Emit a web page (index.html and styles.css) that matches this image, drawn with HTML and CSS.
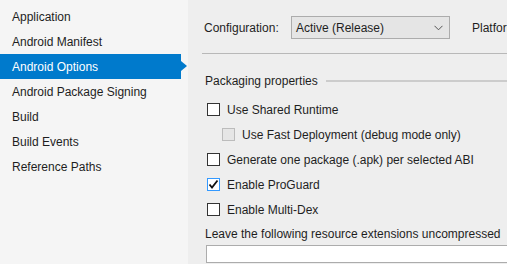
FILE: index.html
```html
<!DOCTYPE html>
<html>
<head>
<meta charset="utf-8">
<link rel="stylesheet" href="styles.css">
</head>
<body>
<div class="page">
  <nav class="sidebar">
    <div class="nav-item">Application</div>
    <div class="nav-item">Android Manifest</div>
    <div class="nav-item selected">Android Options</div>
    <div class="nav-item">Android Package Signing</div>
    <div class="nav-item">Build</div>
    <div class="nav-item">Build Events</div>
    <div class="nav-item">Reference Paths</div>
  </nav>
  <main class="content">
    <div class="config-row">
      <span class="config-label">Configuration:</span>
      <div class="dropdown">
        <span>Active (Release)</span>
        <svg class="chev" width="9" height="6" viewBox="0 0 9 6"><polyline points="0.5,0.8 4.5,4.8 8.5,0.8" fill="none" stroke="#555" stroke-width="1"/></svg>
      </div>
      <span class="platform-label">Platform:</span>
    </div>
    <div class="separator"></div>
    <div class="group-head"><span>Packaging properties</span><div class="group-line"></div></div>
    <div class="check-row"><span class="box"></span><span>Use Shared Runtime</span></div>
    <div class="check-row indent disabled"><span class="box"></span><span>Use Fast Deployment (debug mode only)</span></div>
    <div class="check-row"><span class="box"></span><span>Generate one package (.apk) per selected ABI</span></div>
    <div class="check-row"><span class="box checked"><svg width="11" height="11" viewBox="0 0 11 11"><polyline points="1.5,5.5 4,8.5 9.5,1.5" fill="none" stroke="#111" stroke-width="1.8"/></svg></span><span>Enable ProGuard</span></div>
    <div class="check-row"><span class="box"></span><span>Enable Multi-Dex</span></div>
    <div class="field-label">Leave the following resource extensions uncompressed</div>
    <div class="text-input"></div>
  </main>
</div>
</body>
</html>
```
FILE: styles.css
```css
html, body {
  margin: 0;
  padding: 0;
  width: 507px;
  height: 264px;
  overflow: hidden;
  font-family: "Liberation Sans", Arial, sans-serif;
  font-size: 12px;
  color: #1e1e1e;
}
.page {
  display: flex;
  height: 264px;
  background: #eeeeee;
}
.sidebar {
  width: 188px;
  flex: none;
  background: #f5f5f5;
  padding-top: 4px;
  box-sizing: border-box;
}
.nav-item {
  height: 25px;
  line-height: 24px;
  padding-top: 1px;
  padding-left: 12px;
  width: 181px;
  box-sizing: border-box;
  position: relative;
  white-space: nowrap;
}
.nav-item.selected {
  background: #007acc;
  color: #ffffff;
}
.nav-item.selected::after {
  content: "";
  position: absolute;
  left: 181px;
  top: 7px;
  border-top: 5px solid transparent;
  border-bottom: 5px solid transparent;
  border-left: 6px solid #007acc;
}
.content {
  flex: 1;
  min-width: 0;
  padding-left: 14px;
  padding-top: 16px;
  white-space: nowrap;
}
.config-row {
  display: flex;
  align-items: center;
  height: 23px;
  padding-left: 2px;
}
.config-label {
  width: 87px;
  flex: none;
}
.dropdown {
  width: 159px;
  height: 23px;
  box-sizing: border-box;
  border: 1px solid #acacac;
  background: #e5e5e5;
  display: flex;
  align-items: center;
  justify-content: space-between;
  padding: 0 6px 0 4px;
  flex: none;
}
.chev { display: block; }
.platform-label {
  margin-left: 22px;
}
.separator {
  height: 1px;
  background: #b8b8b8;
  margin-top: 14px;
}
.group-head {
  display: flex;
  align-items: center;
  height: 25px;
  margin-top: 14px;
  margin-bottom: 4px;
  padding-left: 3px;
}
.group-line {
  flex: 1;
  height: 2px;
  background: #cccccc;
  margin-left: 8px;
}
.check-row {
  display: flex;
  align-items: center;
  height: 25px;
  padding-left: 5px;
}
.check-row.indent {
  padding-left: 20px;
}
.box {
  width: 13px;
  height: 13px;
  box-sizing: border-box;
  border: 1px solid #333333;
  background: #ffffff;
  margin-right: 7px;
  flex: none;
  display: flex;
  align-items: center;
  justify-content: center;
}
.disabled .box {
  border-color: #bcbcbc;
  background: #e6e6e6;
}
.box.checked {
  border-color: #3399ff;
}
.box.checked svg { display: block; }
.field-label {
  height: 23px;
  line-height: 25px;
  padding-left: 3px;
}
.text-input {
  height: 18px;
  box-sizing: border-box;
  margin-left: 4px;
  margin-right: -4px;
  background: #ffffff;
  border: 1px solid #acacac;
}
```
